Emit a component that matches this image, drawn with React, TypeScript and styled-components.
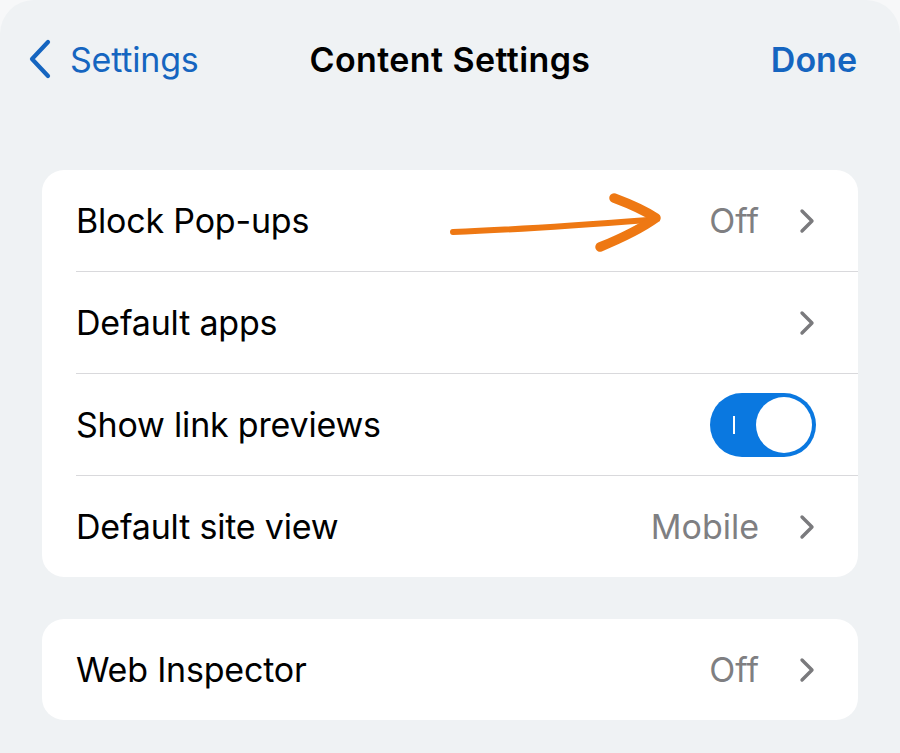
import React from 'react'
import styled, { createGlobalStyle } from 'styled-components'

const GlobalStyle = createGlobalStyle`
  html, body {
    margin: 0;
    padding: 0;
    background: #f7f8f9;
  }
  body {
    font-family: Inter, "Noto Sans", "Liberation Sans", sans-serif;
    -webkit-font-smoothing: antialiased;
  }
`

const Screen = styled.div`
  width: 900px;
  height: 753px;
  box-sizing: border-box;
  background: #eff2f4;
  border-radius: 34px 34px 0 0;
  overflow: hidden;
  padding: 0 42px;
`

const NavBar = styled.div`
  height: 118px;
  margin: 0 -42px;
  padding: 0 43px;
  display: grid;
  grid-template-columns: 1fr auto 1fr;
  align-items: center;
`

const BackButton = styled.div`
  display: flex;
  align-items: center;
  gap: 18px;
  margin-left: -15px;
  color: #1565c0;
  font-size: 34px;
  letter-spacing: -0.2px;
`

const Title = styled.div`
  font-size: 34px;
  font-weight: 600;
  color: #000;
  letter-spacing: 0.4px;
`

const DoneButton = styled.div`
  justify-self: end;
  font-size: 34px;
  font-weight: 600;
  color: #1565c0;
`

const Group = styled.div<{ $top: number }>`
  margin-top: ${({ $top }) => $top}px;
  background: #fff;
  border-radius: 22px;
  overflow: hidden;
`

const Row = styled.div<{ $last?: boolean }>`
  position: relative;
  height: ${({ $last }) => ($last ? 101 : 102)}px;
  margin-left: 34px;
  padding-right: 43px;
  display: flex;
  align-items: center;
  box-sizing: border-box;
  border-bottom: ${({ $last }) => ($last ? 'none' : '1.5px solid #d9d9dc')};
`

const Label = styled.div`
  flex: 1;
  font-size: 34px;
  color: #000;
  letter-spacing: -0.2px;
`

const Value = styled.div`
  font-size: 34px;
  color: #7f7f82;
  margin-right: 40px;
`

const Toggle = styled.div`
  width: 106px;
  height: 64px;
  border-radius: 32px;
  background: #0a78e0;
  position: relative;
  margin-right: -1px;
`

const ToggleMark = styled.div`
  position: absolute;
  left: 23px;
  top: 23px;
  width: 2px;
  height: 18px;
  background: #fff;
`

const Knob = styled.div`
  position: absolute;
  right: 4px;
  top: 4px;
  width: 56px;
  height: 56px;
  border-radius: 50%;
  background: #fff;
`

// hand-drawn annotation arrow laid over the first row
const Arrow = styled.svg`
  position: absolute;
  left: 366px;
  top: 20px;
  pointer-events: none;
`

const Chevron = () => (
  <svg width="16" height="26" viewBox="0 0 16 26">
    <path d="M3 3 L13 13 L3 23" fill="none" stroke="#7a7a7d" strokeWidth="3.4" strokeLinecap="round" strokeLinejoin="round" />
  </svg>
)

const BackChevron = () => (
  <svg width="24" height="40" viewBox="0 0 24 40">
    <path d="M20 3 L4 20 L20 37" fill="none" stroke="#1565c0" strokeWidth="4.2" strokeLinecap="round" strokeLinejoin="round" />
  </svg>
)

const App = () => (
  <>
    <GlobalStyle />
    <Screen>
      <NavBar>
        <BackButton>
          <BackChevron />
          Settings
        </BackButton>
        <Title>Content Settings</Title>
        <DoneButton>Done</DoneButton>
      </NavBar>

      <Group $top={52}>
        <Row>
          <Label>Block Pop-ups</Label>
          <Arrow width="230" height="70" viewBox="0 0 230 70">
            <path d="M11 42 C70 40 140 35 206 30" fill="none" stroke="#ee7813" strokeWidth="6" strokeLinecap="round" />
            <path d="M172 8 C188 14 202 20 214 28 C200 38 180 48 158 57" fill="none" stroke="#ee7813" strokeWidth="9.5" strokeLinecap="round" strokeLinejoin="round" />
          </Arrow>
          <Value>Off</Value>
          <Chevron />
        </Row>
        <Row>
          <Label>Default apps</Label>
          <Chevron />
        </Row>
        <Row>
          <Label>Show link previews</Label>
          <Toggle>
            <ToggleMark />
            <Knob />
          </Toggle>
        </Row>
        <Row $last>
          <Label>Default site view</Label>
          <Value>Mobile</Value>
          <Chevron />
        </Row>
      </Group>

      <Group $top={42}>
        <Row $last>
          <Label>Web Inspector</Label>
          <Value>Off</Value>
          <Chevron />
        </Row>
      </Group>
    </Screen>
  </>
)

export default App
